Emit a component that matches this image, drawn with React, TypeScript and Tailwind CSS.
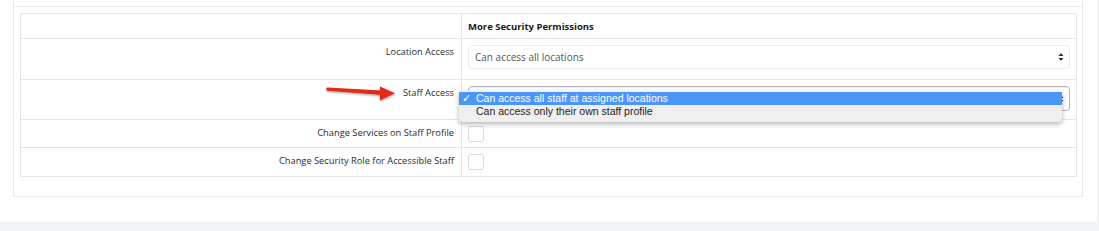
import React from "react";

const OS = { fontFamily: '"Open Sans", "Noto Sans", sans-serif' };
const HV = { fontFamily: '"Liberation Sans", Arial, sans-serif' };

function Arrows() {
  return (
    <svg width="6" height="10" viewBox="0 0 6 10" className="shrink-0">
      <path d="M3 1 L5.5 4 L0.5 4 Z" fill="#333" />
      <path d="M3 9 L5.5 6 L0.5 6 Z" fill="#333" />
    </svg>
  );
}

function RedArrow() {
  return (
    <svg width="72" height="18" viewBox="0 0 72 18" className="block shrink-0">
      <defs>
        <filter id="sh" x="-10%" y="-30%" width="120%" height="180%">
          <feDropShadow dx="0" dy="1.2" stdDeviation="0.9" floodColor="#000" floodOpacity="0.35" />
        </filter>
      </defs>
      <g filter="url(#sh)">
        <path d="M2 2.6 Q0.2 4.2 2 5.8 L57 10 L57 5.6 Z" fill="#e3291b" />
        <path d="M55 1.6 L70 8.2 L55 15.4 Z" fill="#e3291b" />
      </g>
    </svg>
  );
}

function Select({ text, open }: { text: string; open?: boolean }) {
  return (
    <div
      className={
        "flex items-center justify-between rounded-[4px] border bg-white pl-[6px] pr-[5px] " +
        (open ? "h-[25px] border-[#b5b5b5] shadow-[inset_0_1px_1px_rgba(0,0,0,0.08)]" : "h-[24px] border-[#ececec]")
      }
    >
      <span className="block text-[10px] leading-[14px] text-[#555]" style={OS}>
        {text}
      </span>
      <Arrows />
    </div>
  );
}

function Checkbox() {
  return <div className="h-[16px] w-[16px] rounded-[2px] border border-[#dcdcdc] bg-white" />;
}

function Row({
  h,
  label,
  children,
  first,
  arrow,
}: {
  h: string;
  label?: string;
  children?: React.ReactNode;
  first?: boolean;
  arrow?: boolean;
}) {
  return (
    <div className={"grid grid-cols-[441px_1fr] " + h + (first ? "" : " border-t border-[#e6e6e6]")}>
      <div className="flex items-start justify-end border-r border-[#e6e6e6] pr-[7px] pt-[6px]">
        {arrow && (
          <div className="mr-[6px] mt-[-1px]">
            <RedArrow />
          </div>
        )}
        {label && (
          <span className="block text-[9.3px] leading-[14px] text-[#2a2a2a]" style={OS}>
            {label}
          </span>
        )}
      </div>
      <div className="pl-[6px] pr-[6px] pt-[6px]">{children}</div>
    </div>
  );
}

export default function App() {
  return (
    <div className="relative h-[231px] w-[1099px] overflow-hidden bg-[#f1f4f7]">
      <div className="h-[222px] w-[1097px] bg-white">
        <div className="ml-[13px] w-[1070px] border-x border-b border-[#e8e8e8]">
          <div className="h-[7px] border-b border-[#ececec]" />
          <div className="pb-[19px] pl-[6px] pr-[5px] pt-[6px]">
            <div className="border border-[#e6e6e6]">
              <Row h="h-[24px]" first>
                <span className="block text-[9.5px] font-bold leading-[14px] text-[#1a1a1a]" style={OS}>
                  More Security Permissions
                </span>
              </Row>
              <Row h="h-[41px]" label="Location Access">
                <Select text="Can access all locations" />
              </Row>
              <Row h="h-[40px]" label="Staff Access" arrow>
                <div className="relative">
                  <Select text="" open />
                  <div
                    className="absolute left-[-9px] top-[5px] z-10 h-[31px] w-[603px] rounded-[4px] bg-[#efefef] pt-[1px] shadow-[0_2px_5px_rgba(0,0,0,0.3)]"
                    style={HV}
                  >
                    <div className="flex h-[13px] items-center bg-[#4b96fb] text-[10.5px] text-white">
                      <span className="w-[17px] pl-[3px]">✓</span>
                      <span>Can access all staff at assigned locations</span>
                    </div>
                    <div className="flex h-[13px] items-center text-[10.5px] text-[#222]">
                      <span className="w-[17px]" />
                      <span>Can access only their own staff profile</span>
                    </div>
                  </div>
                </div>
              </Row>
              <Row h="h-[28px]" label="Change Services on Staff Profile">
                <Checkbox />
              </Row>
              <Row h="h-[29px]" label="Change Security Role for Accessible Staff">
                <Checkbox />
              </Row>
            </div>
          </div>
        </div>
      </div>
    </div>
  );
}
